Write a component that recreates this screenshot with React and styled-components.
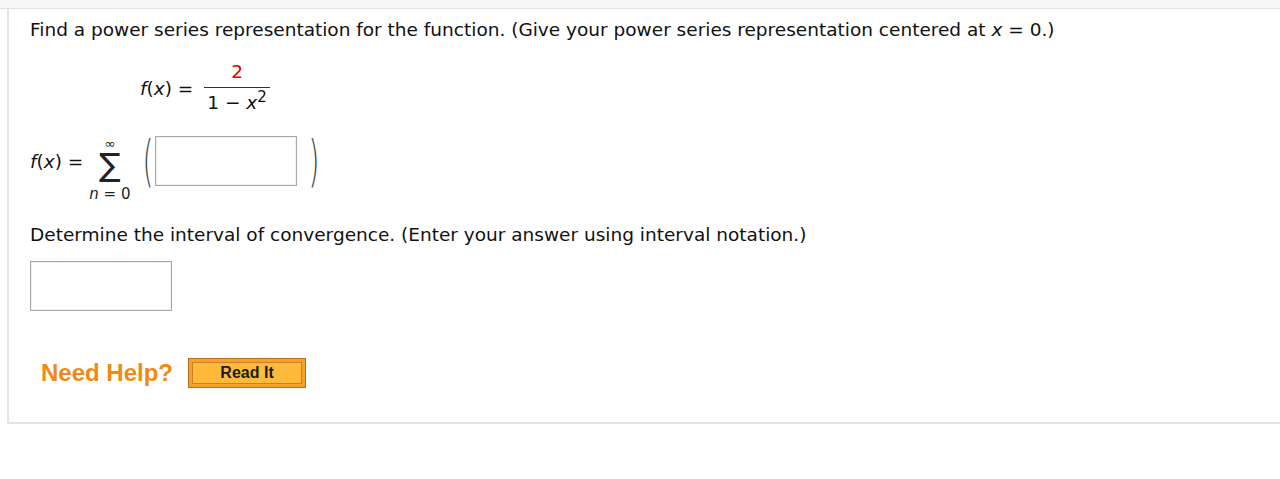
import React from 'react';
import styled, { createGlobalStyle } from 'styled-components';

const GlobalStyle = createGlobalStyle`
  body {
    margin: 0;
    background: #fff;
    font-family: "DejaVu Sans", Verdana, sans-serif;
    color: #111;
  }
`;

const TopStrip = styled.div`
  height: 8px;
  background: #f6f6f6;
  border-bottom: 1px solid #e2e2e2;
`;

const Panel = styled.div`
  margin-left: 7px;
  height: 415px;
  border-left: 2px solid #e4e4e4;
  border-bottom: 2px solid #e4e4e4;
  padding: 10px 0 0 21px;
  box-sizing: border-box;
`;

const Prompt = styled.p`
  margin: ${(p) => p.$margin || '0'};
  font-size: 18.5px;
  line-height: 22px;
`;

const Var = styled.i`
  font-style: italic;
`;

const Display = styled.div`
  display: flex;
  align-items: center;
  height: ${(p) => p.$height || 'auto'};
  margin: ${(p) => p.$margin || '0'};
  font-size: 18.5px;
`;

const Fraction = styled.span`
  display: inline-flex;
  flex-direction: column;
  align-items: center;
  margin-left: 11px;
`;

const Numer = styled.span`
  color: #e00000;
  padding: 0 0 5px;
  line-height: 20px;
`;

const Denom = styled.span`
  border-top: 1px solid #333;
  padding: 4px 3px 0;
  line-height: 22px;
`;

const Sup = styled.sup`
  font-size: 15px;
  line-height: 0;
  vertical-align: 7px;
`;

const SumSign = styled.span`
  display: inline-flex;
  flex-direction: column;
  align-items: center;
  margin: 0 5px 0 6px;
  transform: translateY(8px);
`;

const Limit = styled.span`
  font-size: ${(p) => p.$size || '15px'};
  line-height: 12px;
  color: #222;
  margin: ${(p) => p.$margin || '0'};
`;

const Sigma = styled.span`
  font-size: 32px;
  line-height: 26px;
  color: #222;
`;

const Paren = styled.span`
  font-weight: 200;
  font-size: 56px;
  line-height: 50px;
  color: #4a4a4a;
  transform: scaleX(0.5);
  display: inline-block;
  margin: ${(p) => (p.$close ? '0 0 0 6px' : '0 -4px 0 2px')};
`;

const AnswerBox = styled.input`
  display: block;
  box-sizing: border-box;
  width: 142px;
  height: 50px;
  margin: ${(p) => p.$margin || '0'};
  border: 1px solid #a8a8a8;
  box-shadow: inset 0 0 0 1px #f0f0f0;
  background: #fff;
  padding: 0;
`;

const HelpRow = styled.div`
  display: flex;
  align-items: center;
  margin: 47px 0 0 11px;
`;

const HelpLabel = styled.span`
  font-family: "Liberation Sans", Arial, sans-serif;
  font-weight: bold;
  font-size: 24px;
  color: #f08a10;
  margin-right: 15px;
`;

const ReadButton = styled.button`
  box-sizing: border-box;
  width: 118px;
  height: 30px;
  padding: 0;
  border: 1px solid #b8701e;
  background: #f6a02e;
  display: flex;
  cursor: pointer;
`;

const ButtonFace = styled.span`
  flex: 1;
  margin: 3px;
  border: 1px solid #c98026;
  background: #ffba3c;
  font-family: "Liberation Sans", Arial, sans-serif;
  font-weight: bold;
  font-size: 16px;
  color: #1a1a1a;
  display: flex;
  align-items: center;
  justify-content: center;
`;

export default function App() {
  return (
    <>
      <GlobalStyle />
      <TopStrip />
      <Panel>
        <Prompt>
          Find a power series representation for the function. (Give your power series
          representation centered at <Var>x</Var> = 0.)
        </Prompt>

        <Display $margin="21px 0 0 110px">
          <span><Var>f</Var>(<Var>x</Var>) =</span>
          <Fraction>
            <Numer>2</Numer>
            <Denom>1 − <Var>x</Var><Sup>2</Sup></Denom>
          </Fraction>
        </Display>

        <Display $margin="22px 0 0 0" $height="50px">
          <span><Var>f</Var>(<Var>x</Var>) =</span>
          <SumSign>
            <Limit $size="13px" $margin="0 0 2px">∞</Limit>
            <Sigma>∑</Sigma>
            <Limit $margin="10px 0 0"><Var>n</Var> = 0</Limit>
          </SumSign>
          <Paren>(</Paren>
          <AnswerBox type="text" />
          <Paren $close>)</Paren>
        </Display>

        <Prompt $margin="38px 0 0 0">
          Determine the interval of convergence. (Enter your answer using interval notation.)
        </Prompt>

        <AnswerBox type="text" $margin="15px 0 0 0" />

        <HelpRow>
          <HelpLabel>Need Help?</HelpLabel>
          <ReadButton type="button">
            <ButtonFace>Read It</ButtonFace>
          </ReadButton>
        </HelpRow>
      </Panel>
    </>
  );
}
